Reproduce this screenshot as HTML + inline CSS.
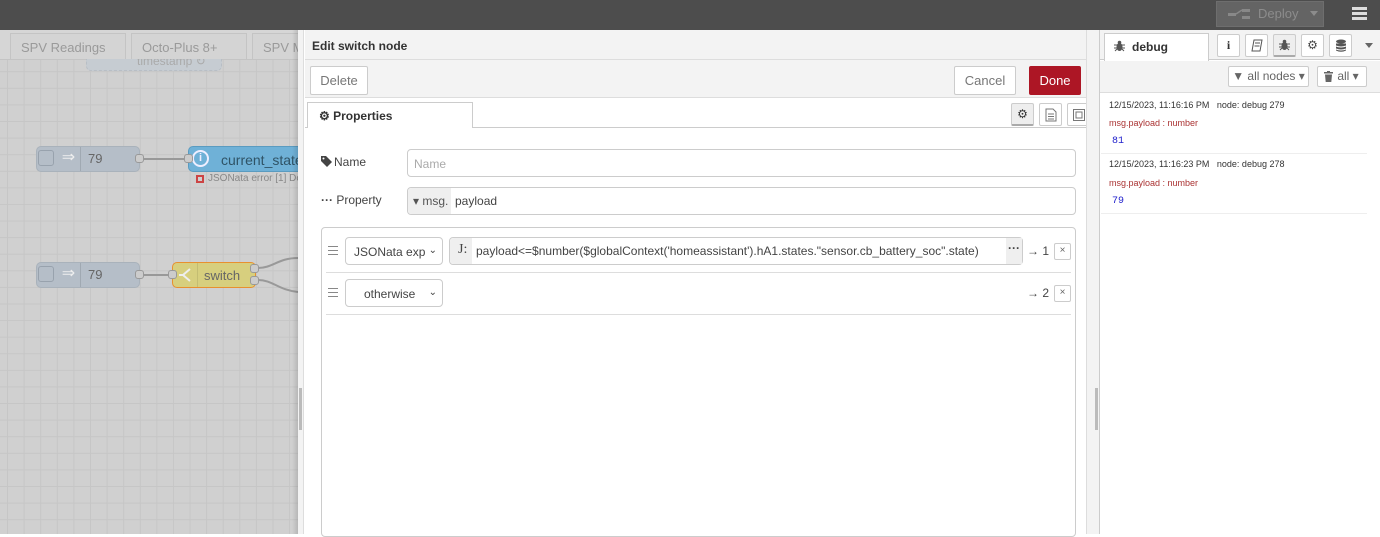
<!DOCTYPE html>
<html><head><style>
*{box-sizing:border-box;margin:0;padding:0}
body{width:1380px;height:534px;overflow:hidden;font-family:"Liberation Sans",Arial,sans-serif;font-size:12px;color:#555;position:relative;background:#fff}
.abs{position:absolute}
#hdr{left:0;top:0;width:1380px;height:30px;background:#4d4d4d}
#canvas{left:0;top:30px;width:298px;height:504px;background-color:#d0d0d0;
background-image:linear-gradient(to right,#c6c6c6 1px,transparent 1px),linear-gradient(to bottom,#c6c6c6 1px,transparent 1px);
background-size:16.6px 16.6px;background-position:7px 8px}
.tab{top:33px;height:26px;border:1px solid #c4c4c4;border-bottom:none;background:#d4d4d4;color:#9a9a9a;font-size:13px;padding:6px 0 0 10px}
.node{height:26px;border:1px solid #a9b2bb;border-radius:5px;background:#b5bec8;color:#666;font-size:13px}
.btn{border:1px solid #ccc;background:#fff;color:#777;font-size:13px;text-align:center;border-radius:2px}
.ib{width:23px;height:23px;border:1px solid #ccc;background:#fff;border-radius:2px;text-align:center;line-height:21px;font-size:12px;color:#666}
.ib svg{display:block;margin:4px auto 0}
input,.inp{border:1px solid #ccc;border-radius:4px;background:#fff}
.nw{white-space:nowrap;overflow:hidden}
</style></head><body>
<div id="hdr" class="abs"></div>
<div class="abs" style="left:1216px;top:1px;width:108px;height:26px;background:#646464;border:1px solid #6e6e6e"></div>
<div class="abs" style="left:1228px;top:8px;width:24px;height:12px">
<svg width="24" height="12"><rect x="0" y="5" width="8" height="3" fill="#888"/><rect x="14" y="1" width="8" height="3" fill="#888"/><rect x="14" y="8" width="8" height="3" fill="#888"/><line x1="8" y1="6" x2="14" y2="2" stroke="#888" stroke-width="1.5"/></svg></div>
<div class="abs" style="left:1258px;top:6px;color:#8c8c8c;font-size:13px">Deploy</div>
<div class="abs" style="left:1310px;top:11px;border-left:4px solid transparent;border-right:4px solid transparent;border-top:5px solid #8c8c8c"></div>
<div class="abs" style="left:1352px;top:7px;width:15px;height:3px;background:#ddd;box-shadow:0 5px 0 #ddd,0 10px 0 #ddd"></div>

<div id="canvas" class="abs"></div>
<div class="abs" style="left:0;top:30px;width:298px;height:30px;background:#d6d6d6;border-bottom:1px solid #c4c4c4"></div>
<div class="abs tab" style="left:10px;width:116px">SPV Readings</div>
<div class="abs tab" style="left:131px;width:116px">Octo-Plus 8+</div>
<div class="abs tab nw" style="left:252px;width:60px">SPV M</div>
<div class="abs" style="left:86px;top:59px;width:136px;height:12px;border:1px dashed #b8bec5;border-top:none;border-radius:0 0 5px 5px;background:#c6ccd2;color:#aaa;font-size:12px;padding-left:50px;line-height:4px;overflow:hidden">timestamp ↻</div>

<div class="abs node" style="left:36px;top:146px;width:104px"></div>
<div class="abs" style="left:38px;top:150px;width:16px;height:16px;background:#b5bec8;border:1px solid #98a2ad;border-radius:3px"></div>
<div class="abs" style="left:57px;top:147px;width:24px;height:24px;border-right:1px solid #a0a9b2;color:#eee;font-size:16px;text-align:center;line-height:22px">⇒</div>
<div class="abs" style="left:88px;top:151px;font-size:13px;color:#666">79</div>
<div class="abs" style="left:135px;top:154px;width:9px;height:9px;background:#ccc;border:1px solid #999;border-radius:3px"></div>
<div class="abs" style="left:144px;top:158px;width:44px;height:2px;background:#999"></div>
<div class="abs nw" style="left:188px;top:146px;width:110px;height:26px;background:#6fb1d7;border:1px solid #5a9bc0;border-right:none;border-radius:5px 0 0 5px;color:#2f5366;font-size:14px;padding:5px 0 0 32px">current_state: s</div>
<div class="abs" style="left:192px;top:150px;width:17px;height:17px;border:2px solid #eef;border-radius:50%;color:#eef;font-size:11px;text-align:center;line-height:13px;font-weight:bold">i</div>
<div class="abs" style="left:184px;top:154px;width:9px;height:9px;background:#ccc;border:1px solid #999;border-radius:3px"></div>
<div class="abs" style="left:196px;top:175px;width:8px;height:8px;border:2px solid #c44"></div>
<div class="abs nw" style="left:208px;top:173px;font-size:10px;color:#888;width:90px">JSONata error [1] De</div>

<div class="abs node" style="left:36px;top:262px;width:104px"></div>
<div class="abs" style="left:38px;top:266px;width:16px;height:16px;background:#b5bec8;border:1px solid #98a2ad;border-radius:3px"></div>
<div class="abs" style="left:57px;top:263px;width:24px;height:24px;border-right:1px solid #a0a9b2;color:#eee;font-size:16px;text-align:center;line-height:22px">⇒</div>
<div class="abs" style="left:88px;top:267px;font-size:13px;color:#666">79</div>
<div class="abs" style="left:135px;top:270px;width:9px;height:9px;background:#ccc;border:1px solid #999;border-radius:3px"></div>
<div class="abs" style="left:144px;top:274px;width:30px;height:2px;background:#999"></div>
<div class="abs" style="left:172px;top:262px;width:84px;height:26px;background:#d7cf7e;border:1px solid #e8902e;border-radius:5px;color:#666;font-size:13px;padding:5px 0 0 31px">switch</div>
<div class="abs" style="left:174px;top:263px;width:24px;height:24px;border-right:1px solid #c4bd72">
<svg width="24" height="24"><path d="M16 6 L9 12 L16 18 M9 12 H5" stroke="#eee" stroke-width="2" fill="none"/></svg></div>
<div class="abs" style="left:168px;top:270px;width:9px;height:9px;background:#ccc;border:1px solid #999;border-radius:3px"></div>
<div class="abs" style="left:250px;top:264px;width:9px;height:9px;background:#ccc;border:1px solid #999;border-radius:3px"></div>
<div class="abs" style="left:250px;top:276px;width:9px;height:9px;background:#ccc;border:1px solid #999;border-radius:3px"></div>
<svg class="abs" style="left:258px;top:255px" width="40" height="40"><path d="M0 13 C15 13 20 3 40 3" stroke="#999" stroke-width="2" fill="none"/><path d="M0 25 C15 25 20 35 40 37" stroke="#999" stroke-width="2" fill="none"/></svg>
<div class="abs" style="left:292px;top:30px;width:6px;height:504px;background:linear-gradient(to right,rgba(0,0,0,0),rgba(0,0,0,0.12))"></div>

<!-- editor tray -->
<div class="abs" style="left:298px;top:30px;width:788px;height:504px;background:#fff;border-left:1px solid #ccc"></div>
<div class="abs" style="left:298px;top:30px;width:6px;height:504px;background:#f3f3f3;border-right:1px solid #ddd"></div>
<div class="abs" style="left:299px;top:388px;width:3px;height:42px;background:#bbb"></div>
<div class="abs" style="left:305px;top:30px;width:781px;height:30px;background:#f3f3f3;border-bottom:1px solid #ddd;font-weight:bold;color:#333;font-size:12px;padding:9px 0 0 7px">Edit switch node</div>
<div class="abs" style="left:305px;top:60px;width:781px;height:38px;background:#f3f3f3;border-bottom:1px solid #ddd"></div>
<div class="abs btn" style="left:310px;top:66px;width:58px;height:29px;line-height:27px">Delete</div>
<div class="abs btn" style="left:954px;top:66px;width:62px;height:29px;line-height:27px">Cancel</div>
<div class="abs" style="left:1029px;top:66px;width:52px;height:29px;background:#ad1625;color:#fff;font-size:13px;text-align:center;line-height:29px;border-radius:2px">Done</div>
<div class="abs" style="left:305px;top:127px;width:781px;height:1px;background:#ccc"></div>
<div class="abs" style="left:307px;top:102px;width:166px;height:26px;background:#fff;border:1px solid #ccc;border-bottom:none;font-weight:bold;color:#333;padding:6px 0 0 11px">⚙ Properties</div>
<div class="abs ib" style="left:1011px;top:103px;background:#eee;border-bottom:2px solid #aaa;color:#333">⚙</div>
<div class="abs ib" style="left:1039px;top:103px"><svg width="12" height="14"><path d="M1 1 H8 L11 4 V13 H1 Z M3 6 H9 M3 8.5 H9 M3 11 H9" stroke="#777" fill="none"/></svg></div>
<div class="abs ib" style="left:1067px;top:103px"><svg width="14" height="14"><rect x="1.5" y="1.5" width="11" height="11" stroke="#777" fill="none"/><rect x="4" y="4" width="6" height="6" stroke="#777" fill="none"/></svg></div>

<svg class="abs" style="left:321px;top:156px" width="11" height="11"><path d="M0 0 H5 L11 6 L6 11 L0 5 Z" fill="#444"/><circle cx="2.5" cy="2.5" r="1" fill="#fff"/></svg>
<div class="abs" style="left:334px;top:155px;color:#444;font-size:12px">Name</div>
<div class="abs inp" style="left:407px;top:149px;width:669px;height:28px;color:#aaa;padding:7px 0 0 6px">Name</div>
<div class="abs" style="left:321px;top:193px;color:#444;font-size:12px"><b>···</b> Property</div>
<div class="abs inp" style="left:407px;top:187px;width:669px;height:28px"></div>
<div class="abs" style="left:408px;top:188px;width:43px;height:26px;background:#efefef;border-radius:4px 0 0 4px;color:#555;padding:6px 0 0 5px;font-size:12px">▾ msg.</div>
<div class="abs" style="left:455px;top:194px;color:#444">payload</div>

<div class="abs" style="left:321px;top:227px;width:755px;height:310px;border:1px solid #ccc;border-radius:4px"></div>
<div class="abs" style="left:328px;top:246px;width:10px;height:1px;background:#888;box-shadow:0 4px 0 #888,0 8px 0 #888"></div>
<div class="abs inp" style="left:345px;top:237px;width:98px;height:28px;color:#444;padding:7px 0 0 8px">JSONata exp<span style="float:right;margin-right:5px;font-size:10px">⌄</span></div>
<div class="abs inp" style="left:449px;top:237px;width:574px;height:28px"></div>
<div class="abs" style="left:450px;top:238px;width:22px;height:26px;background:#efefef;border-radius:4px 0 0 4px;color:#444;font-family:'Liberation Serif';font-size:14px;padding:4px 0 0 8px">J:</div>
<div class="abs" style="left:476px;top:244px;color:#444">payload&lt;=$number($globalContext('homeassistant').hA1.states."sensor.cb_battery_soc".state)</div>
<div class="abs" style="left:1006px;top:238px;width:16px;height:26px;background:#efefef;color:#444;font-weight:bold;text-align:center;line-height:20px">···</div>
<div class="abs" style="left:1027px;top:244px;color:#444">→ 1</div>
<div class="abs ib" style="left:1054px;top:243px;width:17px;height:17px;line-height:14px;font-size:10px">×</div>
<div class="abs" style="left:326px;top:272px;width:745px;height:1px;background:#ddd"></div>
<div class="abs" style="left:328px;top:288px;width:10px;height:1px;background:#888;box-shadow:0 4px 0 #888,0 8px 0 #888"></div>
<div class="abs inp" style="left:345px;top:279px;width:98px;height:28px;color:#444;padding:7px 0 0 18px">otherwise<span style="float:right;margin-right:5px;font-size:10px">⌄</span></div>
<div class="abs" style="left:1027px;top:286px;color:#444">→ 2</div>
<div class="abs ib" style="left:1054px;top:285px;width:17px;height:17px;line-height:14px;font-size:10px">×</div>
<div class="abs" style="left:326px;top:314px;width:745px;height:1px;background:#ddd"></div>

<div class="abs" style="left:1086px;top:30px;width:14px;height:504px;background:#f3f3f3;border-left:1px solid #ddd;border-right:1px solid #ccc"></div>
<div class="abs" style="left:1095px;top:388px;width:3px;height:42px;background:#bbb"></div>

<!-- sidebar -->
<div class="abs" style="left:1100px;top:30px;width:280px;height:30px;background:#f3f3f3;border-bottom:1px solid #ccc"></div>
<div class="abs" style="left:1104px;top:33px;width:105px;height:28px;background:#fff;border:1px solid #ccc;border-bottom:none;font-weight:bold;color:#333;padding:6px 0 0 27px">debug</div>
<svg class="abs" style="left:1114px;top:40px" width="11" height="12"><ellipse cx="5.5" cy="7" rx="3" ry="4" fill="#555"/><circle cx="5.5" cy="2.5" r="1.8" fill="#555"/><path d="M0 5 H11 M0 8 H11 M1 11 L3 9 M10 11 L8 9" stroke="#555"/></svg>
<div class="abs ib" style="left:1217px;top:34px;font-weight:bold;font-family:'Liberation Serif';color:#333">i</div>
<div class="abs ib" style="left:1245px;top:34px"><svg width="12" height="13"><path d="M3 1 H11 L9 12 H1 Z" stroke="#555" fill="none"/><path d="M4 4 H9 M3.5 7 H8.5" stroke="#555"/></svg></div>
<div class="abs ib" style="left:1273px;top:34px;background:#eee;border-bottom:2px solid #aaa"><svg width="11" height="12"><ellipse cx="5.5" cy="7" rx="3" ry="4" fill="#555"/><circle cx="5.5" cy="2.5" r="1.8" fill="#555"/><path d="M0 5 H11 M0 8 H11 M1 11 L3 9 M10 11 L8 9" stroke="#555"/></svg></div>
<div class="abs ib" style="left:1301px;top:34px;color:#444">⚙</div>
<div class="abs ib" style="left:1329px;top:34px"><svg width="12" height="14"><ellipse cx="6" cy="2.5" rx="5" ry="2" fill="#555"/><path d="M1 4.5 V11.5 Q6 14 11 11.5 V4.5" fill="#555"/><path d="M1 7 Q6 9 11 7 M1 10 Q6 12 11 10" stroke="#fff" fill="none"/></svg></div>
<div class="abs" style="left:1365px;top:43px;border-left:4px solid transparent;border-right:4px solid transparent;border-top:5px solid #666"></div>
<div class="abs" style="left:1100px;top:61px;width:280px;height:32px;background:#f3f3f3;border-bottom:1px solid #ddd"></div>
<div class="abs btn" style="left:1228px;top:66px;width:81px;height:21px;font-size:12px;color:#666;line-height:19px">▼ all nodes ▾</div>
<div class="abs btn" style="left:1317px;top:66px;width:50px;height:21px;font-size:12px;color:#666;line-height:19px;padding-left:12px">all ▾</div>
<svg class="abs" style="left:1324px;top:71px" width="9" height="11"><rect x="0" y="1" width="9" height="1.5" fill="#666"/><rect x="3" y="0" width="3" height="1.5" fill="#666"/><path d="M1 3.5 H8 L7.3 11 H1.7 Z" fill="#666"/></svg>
<div class="abs" style="left:1101px;top:93px;width:266px;height:61px;border-bottom:1px solid #eee;background:#fff"></div>
<div class="abs" style="left:1109px;top:100px;font-size:9px;color:#333">12/15/2023, 11:16:16 PM &nbsp;&nbsp;node: debug 279</div>
<div class="abs" style="left:1109px;top:118px;font-size:9px;color:#a33">msg.payload : number</div>
<div class="abs" style="left:1112px;top:136px;font-size:10px;color:#22c;font-family:'Liberation Mono'">81</div>
<div class="abs" style="left:1109px;top:159px;font-size:9px;color:#333">12/15/2023, 11:16:23 PM &nbsp;&nbsp;node: debug 278</div>
<div class="abs" style="left:1109px;top:178px;font-size:9px;color:#a33">msg.payload : number</div>
<div class="abs" style="left:1112px;top:196px;font-size:10px;color:#22c;font-family:'Liberation Mono'">79</div>
<div class="abs" style="left:1101px;top:213px;width:266px;height:1px;background:#eee"></div>
</body></html>
